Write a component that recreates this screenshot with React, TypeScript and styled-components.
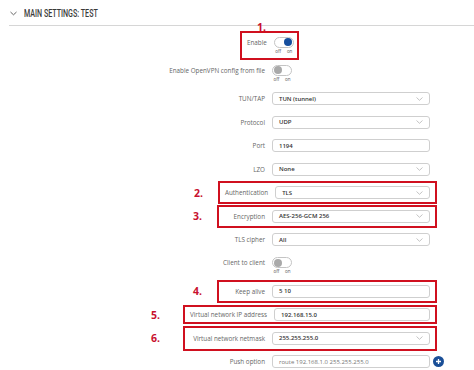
import React from 'react';
import styled, { createGlobalStyle } from 'styled-components';

const Global = createGlobalStyle`
  body {
    margin: 0;
    background: #fff;
    font-family: "Open Sans", "Liberation Sans", sans-serif;
  }
`

const Header = styled.div`
  display: flex;
  align-items: center;
  gap: 7px;
  height: 26px;
  margin-left: 9px;
  padding-left: 1px;
  border-bottom: 1px solid #d6d6d6;
  box-sizing: border-box;
  padding-top: 1px;
`

const Title = styled.div`
  font-family: Roboto, "Liberation Sans", sans-serif;
  font-size: 11.5px;
  font-weight: 500;
  color: #3a3a3a;
  transform: scaleX(0.62);
  transform-origin: left center;
  white-space: nowrap;
`

const Form = styled.div`
  display: flex;
  flex-direction: column;
  padding-top: 5px;
`

const Row = styled.div<{ $h?: number; $tail?: number }>`
  display: flex;
  align-items: center;
  justify-content: flex-end;
  gap: 7px;
  height: ${p => p.$h ?? 23.5}px;
  padding-right: ${p => p.$tail ?? 44}px;
`

const Label = styled.div<{ $toggle?: boolean }>`
  font-size: 6.3px;
  color: #666;
  white-space: nowrap;
  text-align: right;
  margin-bottom: ${p => (p.$toggle ? 6 : 0)}px;
`

const Num = styled.div<{ $gap: number }>`
  font-size: 10.5px;
  font-weight: 700;
  color: #c8102e;
  margin-right: ${p => p.$gap - 7}px;
`

const TopNum = styled(Num)`
  position: absolute;
  left: 15px;
  top: -13px;
  margin: 0;
`

const Mark = styled.div<{ $w: number; $py?: number }>`
  position: relative;
  display: flex;
  align-items: center;
  gap: 7px;
  box-sizing: border-box;
  width: ${p => p.$w}px;
  padding: ${p => p.$py ?? 3}px 5px;
  margin-right: -7px;
  border: 2px solid #d0101f;

  & > ${Label} {
    flex: 1;
  }
`

const Box = styled.div<{ $plain?: boolean }>`
  display: flex;
  align-items: center;
  justify-content: space-between;
  box-sizing: border-box;
  width: 158px;
  height: 13px;
  padding: 0 6px 0 6px;
  border: 1px solid #cfcfcf;
  border-radius: 3px;
  background: #fff;
  font-size: 6px;
  font-weight: ${p => (p.$plain ? 400 : 600)};
  color: ${p => (p.$plain ? '#777' : '#333')};
  white-space: nowrap;
`

const ToggleWrap = styled.div`
  display: flex;
  flex-direction: column;
  align-items: center;
  width: 20px;
`

const Switch = styled.div<{ $on?: boolean }>`
  display: flex;
  align-items: center;
  justify-content: ${p => (p.$on ? 'flex-end' : 'flex-start')};
  box-sizing: border-box;
  width: 20px;
  height: 11px;
  padding: 0 1px;
  border: 1px solid #c4c4c4;
  border-radius: 6px;
  background: #fff;

  &::after {
    content: '';
    width: 8px;
    height: 8px;
    border-radius: 50%;
    background: ${p => (p.$on ? '#154e9e' : '#a9a9a9')};
  }
`

const OffOn = styled.div`
  display: flex;
  justify-content: space-between;
  width: 17px;
  margin-top: 1px;
  font-size: 4.5px;
  line-height: 5px;
  color: #555;
`

const Field = styled.div`
  display: flex;
  align-items: center;
  gap: 3px;
`

const Plus = styled.div`
  display: flex;
  align-items: center;
  justify-content: center;
  width: 11px;
  height: 11px;
  border-radius: 50%;
  background: #1a4f97;
`

function Chevron() {
  return (
    <svg width="7" height="4" viewBox="0 0 7 4">
      <path d="M0.5 0.5 L3.5 3.3 L6.5 0.5" stroke="#b5b5b5" strokeWidth="0.8" fill="none" />
    </svg>
  )
}

function Select({ value }: { value: string }) {
  return <Box><span>{value}</span><Chevron /></Box>
}

function Toggle({ on }: { on?: boolean }) {
  return (
    <ToggleWrap>
      <Switch $on={on} />
      <OffOn><span>off</span><span>on</span></OffOn>
    </ToggleWrap>
  )
}

export default function App() {
  return <div>
    <Global />
    <Header>
      <svg width="7" height="5" viewBox="0 0 7 5">
        <path d="M0.5 1 L3.5 3.8 L6.5 1" stroke="#555" strokeWidth="0.9" fill="none" />
      </svg>
      <Title>MAIN SETTINGS: TEST</Title>
    </Header>

    <Form>
      <Row $h={28} $tail={182}>
        <Mark $w={59} $py={4}>
          <TopNum $gap={0}>1.</TopNum>
          <Label $toggle>Enable</Label>
          <Toggle on />
        </Mark>
      </Row>
      <Row $h={28} $tail={182}>
        <Label $toggle>Enable OpenVPN config from file</Label>
        <Toggle />
      </Row>
      <Row>
        <Label>TUN/TAP</Label>
        <Select value="TUN (tunnel)" />
      </Row>
      <Row>
        <Label>Protocol</Label>
        <Select value="UDP" />
      </Row>
      <Row>
        <Label>Port</Label>
        <Box>1194</Box>
      </Row>
      <Row>
        <Label>LZO</Label>
        <Select value="None" />
      </Row>
      <Row>
        <Num $gap={15}>2.</Num>
        <Mark $w={219}>
          <Label>Authentication</Label>
          <Select value="TLS" />
        </Mark>
      </Row>
      <Row>
        <Num $gap={15}>3.</Num>
        <Mark $w={220}>
          <Label>Encryption</Label>
          <Select value="AES-256-GCM 256" />
        </Mark>
      </Row>
      <Row>
        <Label>TLS cipher</Label>
        <Select value="All" />
      </Row>
      <Row $h={28} $tail={182}>
        <Label $toggle>Client to client</Label>
        <Toggle />
      </Row>
      <Row>
        <Num $gap={15}>4.</Num>
        <Mark $w={220}>
          <Label>Keep alive</Label>
          <Box>5 10</Box>
        </Mark>
      </Row>
      <Row>
        <Num $gap={23}>5.</Num>
        <Mark $w={254} $py={1}>
          <Label>Virtual network IP address</Label>
          <Box>192.168.15.0</Box>
        </Mark>
      </Row>
      <Row>
        <Num $gap={23}>6.</Num>
        <Mark $w={254} $py={4}>
          <Label>Virtual network netmask</Label>
          <Select value="255.255.255.0" />
        </Mark>
      </Row>
      <Row $tail={30}>
        <Label>Push option</Label>
        <Field>
          <Box $plain>route 192.168.1.0 255.255.255.0</Box>
          <Plus>
            <svg width="7" height="7" viewBox="0 0 7 7">
              <path d="M3.5 1 V6 M1 3.5 H6" stroke="#fff" strokeWidth="1.3" />
            </svg>
          </Plus>
        </Field>
      </Row>
    </Form>
  </div>
}
